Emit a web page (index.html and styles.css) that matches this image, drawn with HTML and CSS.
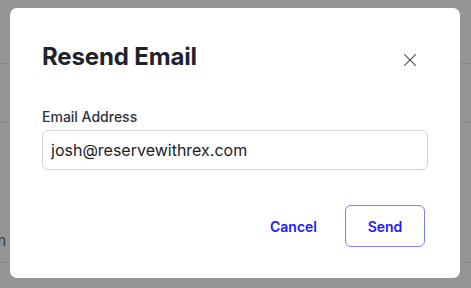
FILE: index.html
```html
<!DOCTYPE html>
<html>
<head>
<meta charset="utf-8">
<link rel="stylesheet" href="styles.css">
</head>
<body>
<div class="backdrop">
  <div class="bg-row bg-row-head"></div>
  <div class="bg-row bg-row-mid"></div>
  <div class="bg-row bg-row-tall"><span class="bg-text">josh@reservewithrex.com</span></div>
</div>
<div class="modal" role="dialog">
  <div class="modal-header">
    <h2 class="modal-title">Resend Email</h2>
    <button class="close-btn" aria-label="Close">
      <svg width="12" height="12" viewBox="0 0 12 12" fill="none" stroke="#4a5568" stroke-width="1.2" stroke-linecap="round"><path d="M0.6 0.6L11.4 11.4M11.4 0.6L0.6 11.4"/></svg>
    </button>
  </div>
  <label class="field-label" for="email">Email Address</label>
  <input class="field-input" id="email" type="text" value="josh@reservewithrex.com">
  <div class="modal-footer">
    <button class="btn btn-ghost">Cancel</button>
    <button class="btn btn-outline">Send</button>
  </div>
</div>
</body>
</html>
```
FILE: styles.css
```css
* { box-sizing: border-box; }
html, body { margin: 0; padding: 0; }
body {
  width: 471px;
  height: 288px;
  overflow: hidden;
  background: #959595;
  font-family: Inter, "Noto Sans", sans-serif;
  position: relative;
}
.backdrop { display: flex; flex-direction: column; }
.bg-row { border-bottom: 1px solid #878787; }
.bg-row-head { height: 64px; }
.bg-row-mid { height: 59px; }
.bg-row-tall { height: 140px; padding-top: 107px; }
.bg-text {
  display: block;
  margin-left: -190px;
  font-size: 16px;
  color: #3d3d3d;
  line-height: 20px;
}
.modal {
  position: absolute;
  left: 10px;
  top: 8px;
  width: 450px;
  height: 270px;
  background: #fff;
  border-radius: 7px;
  padding: 33px 32px 31px 32px;
  display: flex;
  flex-direction: column;
}
.modal-header {
  display: flex;
  align-items: center;
  justify-content: space-between;
  height: 32px;
}
.modal-title {
  margin: 0;
  font-size: 24px;
  line-height: 32px;
  font-weight: 700;
  color: #1f232b;
  letter-spacing: -0.15px;
}
.close-btn {
  border: 0;
  background: none;
  padding: 0;
  width: 12px;
  height: 12px;
  margin-right: 12px;
  margin-top: 6px;
  display: flex;
}
.field-label {
  margin-top: 34px;
  font-size: 14px;
  line-height: 20px;
  font-weight: 500;
  color: #2d3340;
}
.field-input {
  margin-top: 3px;
  height: 40px;
  width: 386px;
  border: 1px solid #d2d3e0;
  border-radius: 6px;
  padding: 0 8px;
  font-family: Inter, "Noto Sans", sans-serif;
  font-size: 16px;
  color: #1a1d24;
  outline: none;
}
.modal-footer {
  margin-top: 35px;
  display: flex;
  justify-content: flex-end;
  align-items: center;
  gap: 12px;
  padding-right: 3px;
}
.btn {
  font-family: Inter, "Noto Sans", sans-serif;
  font-size: 14px;
  font-weight: 600;
  color: #2020ee;
  background: #fff;
  height: 42px;
  border-radius: 6px;
  cursor: pointer;
}
.btn-ghost { border: 1px solid transparent; padding: 0 15px; }
.btn-outline { border: 1px solid #7b80ff; width: 80px; padding: 0; }
```
